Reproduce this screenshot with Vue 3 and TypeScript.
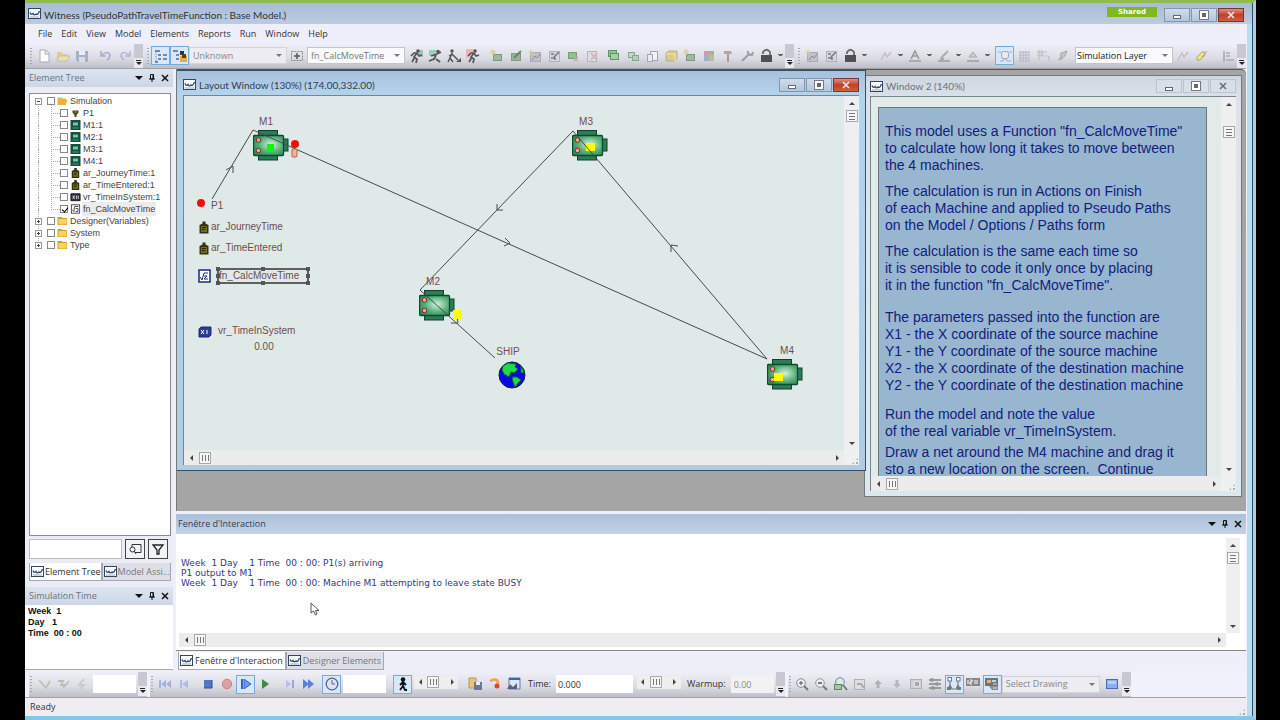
<script setup lang="ts">
interface TreeRow { level: number; icon: string; label: string; checked?: boolean; open?: boolean }
interface Note { lines: string[]; gap: string }
interface Tool { icon?: string; kind?: 'on' | 'sep' | 'thin' | 'wide' | 'caret' }

const menus = ['File', 'Edit', 'View', 'Model', 'Elements', 'Reports', 'Run', 'Window', 'Help']

const tree: TreeRow[] = [
  { level: 0, icon: 'folder-open', label: 'Simulation', open: true },
  { level: 1, icon: 'part', label: 'P1' },
  { level: 1, icon: 'mach', label: 'M1:1' },
  { level: 1, icon: 'mach', label: 'M2:1' },
  { level: 1, icon: 'mach', label: 'M3:1' },
  { level: 1, icon: 'mach', label: 'M4:1' },
  { level: 1, icon: 'attr', label: 'ar_JourneyTime:1' },
  { level: 1, icon: 'attr', label: 'ar_TimeEntered:1' },
  { level: 1, icon: 'vreal', label: 'vr_TimeInSystem:1' },
  { level: 1, icon: 'func', label: 'fn_CalcMoveTime', checked: true },
  { level: 0, icon: 'folder', label: 'Designer(Variables)' },
  { level: 0, icon: 'folder', label: 'System' },
  { level: 0, icon: 'folder', label: 'Type' },
]

const notes: Note[] = [
  { gap: 'g0', lines: ['This model uses a Function "fn_CalcMoveTime"', 'to calculate how long it takes to move between', 'the 4 machines.'] },
  { gap: 'g9', lines: ['The calculation is run in Actions on Finish', 'of each Machine and applied to Pseudo Paths', 'on the Model / Options / Paths form'] },
  { gap: 'g9', lines: ['The calculation is the same each time so', 'it is sensible to code it only once by placing', 'it in the function "fn_CalcMoveTime".'] },
  { gap: 'g15', lines: ['The parameters passed into the function are', 'X1 - the X coordinate of the source machine', 'Y1 - the Y coordinate of the source machine', 'X2 - the X coordinate of the destination machine', 'Y2 - the Y coordinate of the destination machine'] },
  { gap: 'g12', lines: ['Run the model and note the value', 'of the real variable vr_TimeInSystem.'] },
  { gap: 'g4', lines: ['Draw a net around the M4 machine and drag it', 'sto a new location on the screen.  Continue'] },
]

const fileTools: Tool[] = [
  { icon: 'new' }, { icon: 'open' }, { icon: 'save' }, { kind: 'sep' }, { icon: 'undo' }, { icon: 'redo' },
]
const elementTools: Tool[] = [
  { icon: 'run1' }, { icon: 'run2' }, { icon: 'run3' }, { icon: 'run4' }, { kind: 'sep' },
  { icon: 'define' }, { icon: 'detail' }, { icon: 'display' }, { icon: 'edit' }, { icon: 'green' }, { icon: 'delete' }, { kind: 'thin' },
  { icon: 'clone' }, { icon: 'cycle' }, { icon: 'copy' }, { icon: 'pkg' }, { icon: 'define' }, { icon: 'grid3' },
  { icon: 'hammer' }, { icon: 'wrench' }, { icon: 'lock' }, { kind: 'caret' },
]
const drawTools: Tool[] = [
  { icon: 'display' }, { icon: 'edit' }, { icon: 'lock' }, { kind: 'caret' }, { kind: 'wide' },
  { icon: 'curve' }, { kind: 'caret' }, { icon: 'letter' }, { kind: 'caret' }, { icon: 'pen' }, { kind: 'caret' },
  { icon: 'fill' }, { kind: 'caret' }, { kind: 'thin' }, { icon: 'box', kind: 'on' }, { icon: 'grid' }, { icon: 'snap' }, { icon: 'brush' },
]
const layerTools: Tool[] = [{ icon: 'curve' }, { icon: 'link' }, { kind: 'wide' }, { icon: 'align' }]
const modelTools: Tool[] = [{ icon: 'wand' }, { icon: 'check' }, { icon: 'bolt' }]
const runTools: Tool[] = [
  { icon: 'first' }, { icon: 'prev' }, { kind: 'sep' }, { icon: 'stop' }, { icon: 'record' }, { icon: 'step', kind: 'on' },
  { icon: 'play' }, { kind: 'sep' }, { icon: 'next' }, { icon: 'fast' }, { kind: 'sep' }, { icon: 'clock', kind: 'on' },
]
const saveTools: Tool[] = [{ icon: 'savecopy' }, { icon: 'reload' }, { icon: 'report' }]
const zoomTools: Tool[] = [
  { icon: 'zoomin' }, { icon: 'zoomout' }, { icon: 'zoomfit' }, { icon: 'zoomsel' }, { icon: 'up' }, { icon: 'down' },
  { icon: 'camera' }, { icon: 'sliders' }, { icon: 'paths', kind: 'on' }, { icon: 'ticket' }, { icon: 'monitor', kind: 'on' },
]

const machines = [
  { id: 'M1', x: 69, y: 34, tx: 82, ty: 29 },
  { id: 'M3', x: 388, y: 34, tx: 402, ty: 29 },
  { id: 'M2', x: 235, y: 194, tx: 249, ty: 189 },
  { id: 'M4', x: 583, y: 263, tx: 603, ty: 258 },
]
const handles = [[34, 173], [79, 173], [124, 173], [34, 180], [124, 180], [34, 187], [79, 187], [124, 187]]
</script>

<template>
  <svg class="defs" aria-hidden="true">
    <defs>
      <radialGradient id="mg" cx="58%" cy="45%" r="65%">
        <stop offset="0" stop-color="#d8f0dc" /><stop offset=".6" stop-color="#58b07c" /><stop offset="1" stop-color="#2c8a58" />
      </radialGradient>
      <symbol id="logo" viewBox="0 0 13 11"><rect x=".5" y=".5" width="12" height="10" fill="#fff" stroke="#33465e" /><path d="M2 4.500Q3 7.500 5 5.500Q6 8 8 6Q9.500 8 11.500 3" fill="none" stroke="#26467a" stroke-width="1.300" /><path d="M2 9H11" stroke="#9ab" /></symbol>
      <symbol id="machine" viewBox="0 0 36 31"><rect x="5.500" y=".5" width="19" height="6" fill="#2c7c58" stroke="#123f2c" /><rect x="5.500" y="24" width="19" height="6" fill="#2c7c58" stroke="#123f2c" /><rect x="29" y="9" width="6" height="12" fill="#2c7c58" stroke="#123f2c" /><rect x=".5" y="5.500" width="30" height="20" rx="1" fill="url(#mg)" stroke="#0d4a2c" stroke-width="1.300" /><circle cx="5.500" cy="10" r="2.300" fill="#e8a890" stroke="#7a3020" /><circle cx="5.500" cy="20.500" r="2.300" fill="#e8a890" stroke="#7a3020" /></symbol>
      <symbol id="folder" viewBox="0 0 10 10"><path d="M0 1H4L5 2H9.500V9H0Z" fill="#d89a20" /><path d="M1 3H9V8.500H1Z" fill="#f8d468" /></symbol>
      <symbol id="folder-open" viewBox="0 0 10 10"><path d="M0 1.500H4L5 2.500H8.500V9H0Z" fill="#e8b848" /><path d="M2 4H10L8 9H0Z" fill="#f0b040" /></symbol>
      <symbol id="part" viewBox="0 0 10 10"><path d="M2 2.500H8V4.500L6 7V9H4V7L2 4.500Z" fill="#4a4416" /><path d="M4 4H6" stroke="#c8b840" /></symbol>
      <symbol id="mach" viewBox="0 0 10 10"><rect width="10" height="10" fill="#14503e" /><rect x="2.500" y="2.500" width="5" height="3" fill="#7cc0ac" /><path d="M2 8H8" stroke="#4a9a80" /></symbol>
      <symbol id="attr" viewBox="0 0 10 12"><path d="M3.500 0H6.500V2L9.500 3.500V12H.5V3.500L3.500 2Z" fill="#343414" /><rect x="2" y="4.500" width="6" height="6" fill="#6e6c20" /><path d="M3 6H7M3 8H6" stroke="#28280c" /></symbol>
      <symbol id="vreal" viewBox="0 0 12 10"><path d="M1 1.500H11V9H1Z" fill="#303844" stroke="#111" /><path d="M3 3.500L5 7M5 3.500L3 7M7 3.500V7M9 3.500V7" stroke="#fff" stroke-width=".8" /></symbol>
      <symbol id="func" viewBox="0 0 12 12"><rect x="1" y="1" width="10" height="10" fill="#fff" stroke="#333" /><path d="M2 7L4 9L5 3H9.500M6 5.500H9V9H6" fill="none" stroke="#333" /></symbol>
      <symbol id="new" viewBox="0 0 16 16"><path d="M4 2H10L13 5V14H4Z" fill="#fff" stroke="#a9a9b4" /><path d="M9 2V6H13" fill="#e8e8a8" stroke="#b4b4b4" /></symbol>
      <symbol id="open" viewBox="0 0 16 16"><path d="M2 4H7L8 6H13V13H2Z" fill="#d8cfa0" /><path d="M4 8H15L12 13H2Z" fill="#ece0b0" stroke="#bcb490" stroke-width=".7" /></symbol>
      <symbol id="save" viewBox="0 0 16 16"><path d="M2 3H14V14H4L2 12Z" fill="#a8b0c8" /><rect x="5" y="3" width="6" height="4" fill="#eceef6" /><rect x="5" y="9" width="6" height="5" fill="#d8dce8" /></symbol>
      <symbol id="undo" viewBox="0 0 16 16"><path d="M4 7Q10 2 12 7Q12 10 9 12M3 3V8H8" fill="none" stroke="#a6b2d0" stroke-width="1.700" /></symbol>
      <symbol id="redo" viewBox="0 0 16 16"><path d="M12 7Q6 2 4 7Q4 10 7 12M13 3V8H8" fill="none" stroke="#b2bcd6" stroke-width="1.700" /></symbol>
      <symbol id="treea" viewBox="0 0 16 16"><path d="M2 3H7M5 7H8M10 7H14M5 11H8M10 11H14M2 14H5" stroke="#4d6c98" stroke-width="1.500" /><path d="M3 4V14" stroke="#889" stroke-dasharray="1 1" /></symbol>
      <symbol id="treeb" viewBox="0 0 16 16"><path d="M1 3H6M4 7H7M4 11H7" stroke="#4d6c98" stroke-width="1.500" /><rect x="8" y="3" width="4" height="4" fill="#334" /><rect x="8" y="8" width="7" height="6" fill="#e0b050" /><rect x="10" y="6" width="4" height="4" fill="#554020" /></symbol>
      <symbol id="target" viewBox="0 0 16 16"><rect x="2.500" y="3.500" width="11" height="9" fill="none" stroke="#888" stroke-dasharray="2 1" /><path d="M8 5V11M5 8H11" stroke="#555" stroke-width="1.500" /></symbol>
      <symbol id="man" viewBox="0 0 16 16"><circle cx="10" cy="3" r="1.800" fill="#555" /><path d="M9 5L6 9L9 11L8 15M7 9L4 14M3 8L6 5H9L11 8L14 7" fill="none" stroke="#555" stroke-width="1.700" /></symbol>
      <symbol id="run1" viewBox="0 0 16 16"><path d="M10 2H15V9H12Z" fill="#9cc8b0" /><use href="#man" /></symbol>
      <symbol id="run2" viewBox="0 0 16 16"><path d="M2 2H9V8H2Z" fill="#90d4bc" /><path d="M2 13L7 11L9 7M9 11L13 14M4 8L10 6L14 4" fill="none" stroke="#555" stroke-width="1.800" /><circle cx="11" cy="3.500" r="1.800" fill="#555" /></symbol>
      <symbol id="run3" viewBox="0 0 16 16"><circle cx="6" cy="3" r="1.700" fill="#555" /><path d="M6 5L4 10L7 14M4 10L2 14M6 6L9 9L12 12M3 8L6 6" fill="none" stroke="#555" stroke-width="1.500" /><path d="M10 14L15 10V14Z" fill="#555" /></symbol>
      <symbol id="run4" viewBox="0 0 16 16"><path d="M1 1H8V5L3 10H1Z" fill="#f0b4b4" /><use href="#man" /></symbol>
      <symbol id="define" viewBox="0 0 16 16"><rect x="4.500" y="6.500" width="8" height="6" fill="#9cba9c" stroke="#84948a" /><path d="M4 1V7M1 4H7M2 2L6 6M6 2L2 6" stroke="#dccf8c" /></symbol>
      <symbol id="detail" viewBox="0 0 16 16"><rect x="3.500" y="5.500" width="9" height="7" fill="#98b09c" stroke="#889888" /><path d="M6 10L13 3" stroke="#68886c" stroke-width="2" /></symbol>
      <symbol id="display" viewBox="0 0 16 16"><rect x="3.500" y="4.500" width="10" height="9" fill="#c0c2c8" stroke="#a8aab2" /><path d="M5 12L8 8L10 10L13 6" fill="none" stroke="#888a96" /><path d="M4 1V7M1 4H7" stroke="#dccf9c" /></symbol>
      <symbol id="edit" viewBox="0 0 16 16"><rect x="3.500" y="3.500" width="10" height="10" fill="#d6d8de" stroke="#acb0b8" /><path d="M5 10H9V12M8 9L13 4M5 6H8" fill="none" stroke="#777a84" stroke-width="1.600" /></symbol>
      <symbol id="green" viewBox="0 0 16 16"><rect x="3.500" y="4.500" width="8" height="6" fill="#8cc48c" stroke="#789c7c" /><path d="M9 9L13 13M13 9L9 13" stroke="#c8aa90" stroke-width="1.300" /></symbol>
      <symbol id="delete" viewBox="0 0 16 16"><rect x="3.500" y="3.500" width="9" height="10" fill="#dcdce2" stroke="#b4b4bc" /><path d="M7 5L13 12M13 5L7 12" stroke="#d8b0b4" stroke-width="1.500" /></symbol>
      <symbol id="clone" viewBox="0 0 16 16"><rect x="2.500" y="2.500" width="8" height="6" fill="#88c48c" stroke="#5c9664" /><rect x="4.500" y="5.500" width="8" height="6" fill="#a4d0a4" stroke="#5c9664" /></symbol>
      <symbol id="cycle" viewBox="0 0 16 16"><rect x="3.500" y="4.500" width="6" height="5" fill="#c4d8c4" stroke="#8aa48c" /><rect x="7.500" y="7.500" width="6" height="5" fill="#b4d0b4" stroke="#8aa48c" /></symbol>
      <symbol id="copy" viewBox="0 0 16 16"><rect x="6.500" y="3.500" width="7" height="9" fill="#f2f2f6" stroke="#a4a4ae" /><rect x="3.500" y="6.500" width="5" height="7" fill="#eaeaf0" stroke="#a4a4ae" /></symbol>
      <symbol id="pkg" viewBox="0 0 16 16"><path d="M3 5L6 3H14V10L12 13H3Z" fill="#d8cc88" stroke="#b4a870" stroke-width=".8" /><path d="M3 6H12V13" fill="none" stroke="#f2e8b8" /></symbol>
      <symbol id="grid3" viewBox="0 0 16 16"><path d="M3 3H8V7H3Z" fill="#c8a09c" /><path d="M8 3H13V7H8Z" fill="#a0b4a0" /><path d="M3 7H8V13H3Z" fill="#9cb0c8" /><path d="M8 7H13V13H8Z" fill="#bcbc9c" /></symbol>
      <symbol id="hammer" viewBox="0 0 16 16"><path d="M4 3H11L12 6H4Z" fill="#b0a6a6" /><path d="M8 6V14" stroke="#bc9494" stroke-width="2" /></symbol>
      <symbol id="wrench" viewBox="0 0 16 16"><path d="M3 13L10 6M9 3Q8 7 13 7L14 4" fill="none" stroke="#9c9ca6" stroke-width="2" /></symbol>
      <symbol id="lock" viewBox="0 0 16 16"><rect x="3" y="7" width="11" height="7" fill="#505054" /><path d="M5 6V4Q8.500 -.5 12 4V7" fill="none" stroke="#6a6a6e" stroke-width="1.800" /></symbol>
      <symbol id="curve" viewBox="0 0 16 16"><path d="M3 12L7 5L9 9L13 4" fill="none" stroke="#ccb8c0" stroke-width="1.400" /></symbol>
      <symbol id="letter" viewBox="0 0 16 16"><path d="M4 11L8 3L12 11M6 8H10" fill="none" stroke="#999" stroke-width="1.600" /><path d="M2 13H14" stroke="#aaa" stroke-width="2" /></symbol>
      <symbol id="pen" viewBox="0 0 16 16"><path d="M5 10L12 3M4 11H8" stroke="#aaa" stroke-width="1.800" /><path d="M2 13H14" stroke="#aaa" stroke-width="2" /></symbol>
      <symbol id="fill" viewBox="0 0 16 16"><path d="M4 9L8 4L12 9Z" fill="#ccc" stroke="#aaa" /><path d="M2 13H14" stroke="#aaa" stroke-width="2" /></symbol>
      <symbol id="box" viewBox="0 0 16 16"><rect x="4.500" y="3.500" width="7" height="7" rx="2" fill="#e8eaf0" stroke="#9aa4b4" /><path d="M1 4H4M12 4H15M3 13H6L8 10L10 13H14" fill="none" stroke="#a4a8b4" /></symbol>
      <symbol id="grid" viewBox="0 0 16 16"><path d="M3 4H13M3 7H13M3 10H13M3 13H13M4 3V14M7 3V14M10 3V14M13 3V14" stroke="#b4b8cc" /></symbol>
      <symbol id="snap" viewBox="0 0 16 16"><path d="M2 4H12M2 7H9M4 2V12M7 2V9M10 8H14V13" fill="none" stroke="#b8bac6" /></symbol>
      <symbol id="brush" viewBox="0 0 16 16"><path d="M4 12L8 9M7 5L13 3L11 8L6 12Z" fill="#c4c4ca" stroke="#aaa" /></symbol>
      <symbol id="link" viewBox="0 0 16 16"><path d="M3 9L8 4H11V7L6 12H3ZM8 9L13 3" fill="#ece48c" stroke="#b4ac50" /></symbol>
      <symbol id="align" viewBox="0 0 16 16"><path d="M4 3V14" stroke="#888" /><path d="M6 5H10M6 8H10M6 12H14" stroke="#aab" stroke-width="1.500" /></symbol>
      <symbol id="wand" viewBox="0 0 16 16"><path d="M3 4L10 12L14 5" fill="none" stroke="#c2c0b4" stroke-width="1.800" /></symbol>
      <symbol id="check" viewBox="0 0 16 16"><path d="M3 5H8L6 9H10M8 12L14 5" fill="none" stroke="#bcbeb4" stroke-width="1.800" /></symbol>
      <symbol id="bolt" viewBox="0 0 16 16"><path d="M10 3L5 9H10L6 13" fill="none" stroke="#c6c6c8" stroke-width="1.600" /></symbol>
      <symbol id="first" viewBox="0 0 16 16"><path d="M3 4V12" stroke="#a4b2e0" stroke-width="2" /><path d="M9 4V12L4 8ZM14 4V12L9 8Z" fill="#a4b2e0" /></symbol>
      <symbol id="prev" viewBox="0 0 16 16"><path d="M5 4V12" stroke="#b0bce4" stroke-width="2" /><path d="M12 4V12L6 8Z" fill="#b0bce4" /></symbol>
      <symbol id="stop" viewBox="0 0 16 16"><rect x="4" y="4" width="8" height="8" fill="#5078c8" /><path d="M4 12H12V4" fill="none" stroke="#2c4e94" /></symbol>
      <symbol id="record" viewBox="0 0 16 16"><circle cx="8" cy="8" r="4.700" fill="#e0a0a0" stroke="#cc8080" /></symbol>
      <symbol id="step" viewBox="0 0 16 16"><path d="M4 3V13" stroke="#3264bc" stroke-width="2" /><path d="M6 3L13 8L6 13Z" fill="#6a9ae4" stroke="#3264bc" /></symbol>
      <symbol id="play" viewBox="0 0 16 16"><path d="M5 3L12 8L5 13Z" fill="#3c8c44" /></symbol>
      <symbol id="next" viewBox="0 0 16 16"><path d="M12 4V12" stroke="#98a8dc" stroke-width="2" /><path d="M5 4V12L10 8Z" fill="#b4c0e8" /></symbol>
      <symbol id="fast" viewBox="0 0 16 16"><path d="M3 3L9 8L3 13ZM8 3L14 8L8 13Z" fill="#5a80d8" /></symbol>
      <symbol id="clock" viewBox="0 0 16 16"><circle cx="8" cy="8" r="5.800" fill="#dce4f4" stroke="#56658c" stroke-width="1.300" /><path d="M8 4V8H11" fill="none" stroke="#56658c" /></symbol>
      <symbol id="walk" viewBox="0 0 16 16"><circle cx="8" cy="3.500" r="2.300" fill="#111" /><path d="M8 5V10M8 6L5 9M8 6L11 9M8 10L5 14M8 10L10 14H12" fill="none" stroke="#111" stroke-width="1.800" /></symbol>
      <symbol id="savecopy" viewBox="0 0 16 16"><path d="M2 2H9V12H2Z" fill="#e8c878" stroke="#b89848" /><path d="M7 6H15V14H7Z" fill="#6a7898" /><rect x="9" y="6" width="4" height="3" fill="#eef" /></symbol>
      <symbol id="reload" viewBox="0 0 16 16"><path d="M4 5Q12 1 12 8" fill="none" stroke="#f0a040" stroke-width="2.500" /><circle cx="11" cy="10" r="2.500" fill="#d84830" /></symbol>
      <symbol id="report" viewBox="0 0 16 16"><path d="M4 2H15V13H4Z" fill="#dfe8f8" stroke="#5878b0" /><path d="M4 3H15" stroke="#3c64b0" stroke-width="2" /><path d="M2 13L5 8L8 11L12 7V13Z" fill="#5a6478" /></symbol>
      <symbol id="zoomin" viewBox="0 0 16 16"><circle cx="7" cy="7" r="4.300" fill="#eee" stroke="#8c8c94" /><path d="M10 10L14 14" stroke="#777" stroke-width="2" /><path d="M5 7H9M7 5V9" stroke="#555" /></symbol>
      <symbol id="zoomout" viewBox="0 0 16 16"><circle cx="7" cy="7" r="4.300" fill="#eee" stroke="#8c98a4" /><path d="M10 10L14 14" stroke="#777" stroke-width="2" /><path d="M5 7H9" stroke="#357" stroke-width="1.500" /></symbol>
      <symbol id="zoomfit" viewBox="0 0 16 16"><circle cx="8" cy="6" r="4.300" fill="#dce8ee" stroke="#68889c" /><path d="M11 9L15 14" stroke="#777" stroke-width="2" /><rect x="2.500" y="8.500" width="7" height="5" fill="#a8c8a0" stroke="#648464" /></symbol>
      <symbol id="zoomsel" viewBox="0 0 16 16"><rect x="3.500" y="3.500" width="10" height="10" fill="#dedee2" stroke="#b0b0b4" /><path d="M6 8H10L13 12" fill="none" stroke="#aaa" stroke-width="2" /></symbol>
      <symbol id="up" viewBox="0 0 16 16"><path d="M8 4L12 8H9.500V12H6.500V8H4Z" fill="#b0b0b4" /></symbol>
      <symbol id="down" viewBox="0 0 16 16"><path d="M8 12L12 8H9.500V4H6.500V8H4Z" fill="#b8b8bc" /></symbol>
      <symbol id="camera" viewBox="0 0 16 16"><rect x="2.500" y="3.500" width="11" height="9" fill="#d0d0d4" stroke="#b0b0b4" /><circle cx="9" cy="8" r="3" fill="#a8a8ae" stroke="#eee" /></symbol>
      <symbol id="sliders" viewBox="0 0 16 16"><path d="M2 4H14M2 8H14M2 12H14" stroke="#808084" stroke-width="1.500" /><circle cx="5" cy="4" r="2" fill="#999" /><circle cx="10" cy="8" r="2" fill="#999" /><circle cx="6" cy="12" r="2" fill="#999" /></symbol>
      <symbol id="paths" viewBox="0 0 16 16"><path d="M4 4V9L2.500 12M4 9L6 13H10L12 9V4M12 9L13.500 12" fill="none" stroke="#777" stroke-width="1.200" /><rect x="2" y="1.500" width="3.500" height="3.500" fill="#fff" stroke="#777" /><rect x="10.500" y="1.500" width="3.500" height="3.500" fill="#fff" stroke="#777" /><rect x="1" y="11" width="4" height="3" fill="#777" /><rect x="11" y="11" width="4" height="3" fill="#777" /></symbol>
      <symbol id="ticket" viewBox="0 0 16 16"><rect x="1" y="2" width="14" height="8" fill="#888" /><path d="M3 4V8M5 4H7V6H5V8H7M10 4V8M12 4V8" fill="none" stroke="#fff" /></symbol>
      <symbol id="monitor" viewBox="0 0 16 16"><path d="M1 2H14V10H1Z" fill="#6c7480" /><path d="M3 4H7V7H3Z" fill="#e0b080" /><path d="M8 4H12V6H8Z" fill="#c8d0d8" /><path d="M5 10H14V14H8Z" fill="#8c8c90" /><path d="M9 8H13M9 12H13" stroke="#ddd" /></symbol>
      <symbol id="screen" viewBox="0 0 16 16"><rect x="2.500" y="3.500" width="11" height="9" fill="#88b0f0" stroke="#486cb4" /><path d="M4 5H12V8H4Z" fill="#b4d0fc" /></symbol>
      <symbol id="pin" viewBox="0 0 8 8"><path d="M2.500 .5H5.500V5H2.500ZM1 5H7M4 5V8" fill="none" stroke="#111" /><path d="M5 1V5" stroke="#111" /></symbol>
      <symbol id="cross" viewBox="0 0 8 8"><path d="M1 1L7 7M7 1L1 7" stroke="#111" stroke-width="1.500" /></symbol>
      <symbol id="drop" viewBox="0 0 8 8"><path d="M0 2H8L4 6Z" fill="#111" /></symbol>
    </defs>
  </svg>

  <div class="stage">
    <main class="app">
      <header class="title">
        <svg class="logo"><use href="#logo" /></svg>
        <h1>Witness (PseudoPathTravelTimeFunction : Base Model.)</h1>
        <span class="shared">Shared</span>
        <div class="caps"><button class="cap" aria-label="Minimize"><i class="min" /></button><button class="cap" aria-label="Maximize"><i class="max" /></button><button class="cap red" aria-label="Close"><svg><use href="#cross" /></svg></button></div>
      </header>

      <nav class="menu"><button v-for="m in menus" :key="m">{{ m }}</button></nav>

      <div class="toolbar">
        <div class="group">
          <i class="grip" />
          <template v-for="(t, i) in fileTools" :key="i"><i v-if="!t.icon" :class="t.kind" /><button v-else class="tool" :aria-label="t.icon"><svg><use :href="'#' + t.icon" /></svg></button></template>
          <button class="over" aria-label="More file tools" />
        </div>
        <div class="group">
          <i class="grip" />
          <button class="tool on" aria-label="Tree view"><svg><use href="#treea" /></svg></button>
          <button class="tool on" aria-label="Tree details"><svg><use href="#treeb" /></svg></button>
          <span class="pick"><select class="flat" aria-label="Element type"><option>Unknown</option></select></span>
          <button class="tool" aria-label="Locate"><svg><use href="#target" /></svg></button>
          <span class="pick inset"><select aria-label="Element"><option>fn_CalcMoveTime</option></select></span>
          <template v-for="(t, i) in elementTools" :key="i"><i v-if="!t.icon" :class="t.kind" /><button v-else class="tool" :aria-label="t.icon"><svg><use :href="'#' + t.icon" /></svg></button></template>
          <button class="over" aria-label="More element tools" />
        </div>
        <div class="group">
          <i class="grip" />
          <template v-for="(t, i) in drawTools" :key="i"><i v-if="!t.icon" :class="t.kind" /><button v-else class="tool" :class="t.kind" :aria-label="t.icon"><svg><use :href="'#' + t.icon" /></svg></button></template>
          <span class="pick layer"><select aria-label="Layer"><option>Simulation Layer</option></select></span>
          <template v-for="(t, i) in layerTools" :key="i"><i v-if="!t.icon" :class="t.kind" /><button v-else class="tool" :aria-label="t.icon"><svg><use :href="'#' + t.icon" /></svg></button></template>
          <button class="over double" aria-label="More drawing tools" />
        </div>
      </div>

      <div class="work">
        <aside class="side">
          <div class="dock"><h2>Element Tree</h2><button aria-label="Menu"><svg><use href="#drop" /></svg></button><button aria-label="Pin"><svg><use href="#pin" /></svg></button><button aria-label="Close"><svg><use href="#cross" /></svg></button></div>
          <ul class="tree">
            <li v-for="r in tree" :key="r.label" :class="'lv' + r.level">
              <button v-if="r.level === 0" class="exp" :class="{ open: r.open }" aria-label="Expand" />
              <label :class="{ sel: r.checked }"><input type="checkbox" :checked="r.checked"><svg><use :href="'#' + r.icon" /></svg><span>{{ r.label }}</span></label>
            </li>
          </ul>
          <div class="find"><input type="text" aria-label="Find element"><button aria-label="Find"><svg viewBox="0 0 14 12"><path d="M4 4V1.500H13V9.500H7" fill="none" stroke="#333" /><circle cx="4.500" cy="6.500" r="2.500" fill="none" stroke="#333" /><path d="M6 8L8 11" stroke="#333" /></svg></button><button aria-label="Filter"><svg viewBox="0 0 14 12"><path d="M2 2H12L8 7V11H6V7Z" fill="none" stroke="#222" stroke-width="1.300" /></svg></button></div>
          <div class="tabs"><button class="active"><svg><use href="#logo" /></svg>Element Tree</button><button><svg><use href="#logo" /></svg>Model Assi...</button></div>
          <div class="dock second"><h2>Simulation Time</h2><button aria-label="Menu"><svg><use href="#drop" /></svg></button><button aria-label="Pin"><svg><use href="#pin" /></svg></button><button aria-label="Close"><svg><use href="#cross" /></svg></button></div>
          <pre class="clockbox">Week  1
Day   1
Time  00 : 00</pre>
        </aside>

        <section class="main">
          <div class="mdi">
            <section class="win two">
              <header><svg class="logo"><use href="#logo" /></svg><h2>Window 2 (140%)</h2><div class="caps"><button class="cap" aria-label="Minimize"><i class="min" /></button><button class="cap" aria-label="Maximize"><i class="max" /></button><button class="cap" aria-label="Close"><svg class="pale"><use href="#cross" /></svg></button></div></header>
              <div class="body">
                <div class="view">
                  <div class="notes"><p v-for="n in notes" :key="n.lines[0]" :class="n.gap"><span v-for="l in n.lines" :key="l">{{ l }}</span></p></div>
                </div>
                <div class="vbar"><button class="a-up" aria-label="Scroll up" /><i class="thumb low" /><button class="a-down" aria-label="Scroll down" /></div>
                <div class="hbar"><button class="a-left" aria-label="Scroll left" /><i class="thumb" /><button class="a-right" aria-label="Scroll right" /></div>
                <i class="size" />
              </div>
            </section>

            <section class="win one">
              <header><svg class="logo"><use href="#logo" /></svg><h2>Layout Window (130%) (174.00,332.00)</h2><div class="caps"><button class="cap" aria-label="Minimize"><i class="min" /></button><button class="cap" aria-label="Maximize"><i class="max" /></button><button class="cap red" aria-label="Close"><svg><use href="#cross" /></svg></button></div></header>
              <div class="body">
                <svg class="canvas" role="img" aria-label="Model layout">
                  <use v-for="m in machines" :key="m.id" href="#machine" :x="m.x" :y="m.y" width="36" height="31" />
                  <rect x="402" y="47" width="9" height="8" fill="#ff0" /><rect x="590" y="277" width="9" height="8" fill="#ff0" />
                  <g fill="none" stroke="#444c4a">
                    <path d="M28 103L69 34L583 263L389 35L236 194L311 262" />
                    <path d="M42 74L49 70L49 77M313 108V114H319M320 150L326 147L321 142M494 150L487 149L487 156M267 227L274 227L273 220" />
                  </g>
                  <rect x="83" y="48" width="7" height="7" fill="#0f0" /><rect x="269" y="214" width="9" height="9" fill="#ff0" />
                  <circle cx="17" cy="107" r="4" fill="#f01010" /><circle cx="111" cy="48" r="4" fill="#f01010" />
                  <rect x="108" y="53" width="5" height="8" rx="1" fill="#e8b898" stroke="#a86848" />
                  <use href="#attr" x="15" y="125" width="10" height="13" /><use href="#attr" x="15" y="146" width="10" height="13" />
                  <rect x="15" y="174" width="11" height="12" fill="#fff" stroke="#1a2a80" stroke-width="1.500" /><path d="M16 181L18 184L20 177H24M20 180H23L20 183H24" fill="none" stroke="#1a2a80" />
                  <path d="M15 233L17 231H27V239L25 241H15Z" fill="#2a3c94" stroke="#1a2a80" /><path d="M17 234L20 238M20 234L17 238M23 234V238" stroke="#fff" />
                  <circle cx="328" cy="279" r="13" fill="#0808e8" stroke="#123" />
                  <path d="M319 270L324 267L332 268L331 271L334 273L330 277L327 276L325 281L320 278L318 274ZM328 281L333 281L337 284L334 287L331 291L329 286ZM337 270L340 276L337 277Z" fill="#20d848" stroke="#0a6a28" />
                  <rect x="34" y="173" width="90" height="14" fill="none" stroke="#333" stroke-width="1.500" />
                  <rect v-for="h in handles" :key="h.join()" :x="h[0] - 2" :y="h[1] - 2" width="4" height="4" fill="#555" />
                  <g class="names">
                    <text v-for="m in machines" :key="m.id" :x="m.tx" :y="m.ty" text-anchor="middle">{{ m.id }}</text>
                    <text x="324" y="259" text-anchor="middle">SHIP</text>
                    <text x="27" y="113">P1</text>
                    <text x="27" y="134">ar_JourneyTime</text>
                    <text x="27" y="155">ar_TimeEntered</text>
                    <text x="35" y="183">fn_CalcMoveTime</text>
                    <text x="34" y="238">vr_TimeInSystem</text>
                    <text x="80" y="254" text-anchor="middle">0.00</text>
                  </g>
                </svg>
                <div class="vbar"><button class="a-up" aria-label="Scroll up" /><i class="thumb" /><button class="a-down" aria-label="Scroll down" /></div>
                <div class="hbar"><button class="a-left" aria-label="Scroll left" /><i class="thumb" /><button class="a-right" aria-label="Scroll right" /></div>
                <i class="size" />
              </div>
            </section>
          </div>

          <div class="dock log-head"><h2>Fenêtre d'Interaction</h2><button aria-label="Menu"><svg><use href="#drop" /></svg></button><button aria-label="Pin"><svg><use href="#pin" /></svg></button><button aria-label="Close"><svg><use href="#cross" /></svg></button></div>
          <div class="log">
            <pre>Week  1 Day    1 Time  00 : 00: P1(s) arriving
P1 output to M1
Week  1 Day    1 Time  00 : 00: Machine M1 attempting to leave state BUSY</pre>
            <div class="vbar"><button class="a-up" aria-label="Scroll up" /><i class="thumb" /><button class="a-down" aria-label="Scroll down" /></div>
            <div class="hbar"><button class="a-left" aria-label="Scroll left" /><i class="thumb" /><button class="a-right" aria-label="Scroll right" /></div>
            <svg class="cursor" viewBox="0 0 10 14"><path d="M1 1V11L3.500 9L5.500 13L7 12L5.500 8.500H9Z" fill="#fff" stroke="#555" /></svg>
          </div>
          <div class="tabs"><button class="active"><svg><use href="#logo" /></svg>Fenêtre d'Interaction</button><button><svg><use href="#logo" /></svg>Designer Elements</button></div>
        </section>
      </div>

      <div class="toolbar bottom">
        <div class="group">
          <i class="grip" />
          <button v-for="t in modelTools" :key="t.icon" class="tool" :aria-label="t.icon"><svg><use :href="'#' + t.icon" /></svg></button>
          <input class="box" type="text" aria-label="Model value">
          <button class="over" aria-label="More model tools" />
        </div>
        <div class="group">
          <i class="grip" />
          <template v-for="(t, i) in runTools" :key="i"><i v-if="!t.icon" :class="t.kind" /><button v-else class="tool" :class="t.kind" :aria-label="t.icon"><svg><use :href="'#' + t.icon" /></svg></button></template>
          <input class="box" type="text" aria-label="Stop time">
          <i class="sep" />
          <button class="tool on" aria-label="Walk"><svg><use href="#walk" /></svg></button>
          <div class="mini"><button class="a-left" aria-label="Slower walk" /><i class="thumb" /><button class="a-right" aria-label="Faster walk" /></div>
          <i class="wide" />
          <button v-for="t in saveTools" :key="t.icon" class="tool" :aria-label="t.icon"><svg><use :href="'#' + t.icon" /></svg></button>
          <label for="time">Time:</label><input id="time" class="box long" type="text" value="0.000">
          <div class="mini"><button class="a-left" aria-label="Slower" /><i class="thumb" /><button class="a-right" aria-label="Faster" /></div>
          <label for="warm">Warmup:</label><input id="warm" class="box dim" type="text" value="0.00">
          <button class="over" aria-label="More run tools" />
        </div>
        <div class="group">
          <i class="grip" />
          <button v-for="t in zoomTools" :key="t.icon" class="tool" :class="t.kind" :aria-label="t.icon"><svg><use :href="'#' + t.icon" /></svg></button>
          <span class="pick"><select class="flat" aria-label="Drawing"><option>Select Drawing</option></select></span>
          <i class="thin" />
          <button class="tool" aria-label="Full screen"><svg><use href="#screen" /></svg></button>
          <button class="over" aria-label="More view tools" />
        </div>
      </div>

      <footer class="status">Ready<i class="size" /></footer>
    </main>
  </div>
</template>

<style>
html, body { background: #000; overflow: hidden; }
</style>

<style scoped>
* { box-sizing: border-box; }
.defs { position: absolute; width: 0; height: 0; }
button, input, select { font: inherit; color: inherit; margin: 0; padding: 0; border: 0; background: none; border-radius: 0; outline: 0; }
h1, h2, p, pre, ul { margin: 0; padding: 0; font: inherit; list-style: none; }
i { display: block; flex: none; }
.stage { height: 100vh; padding: 0 24px 0 25px; background: #000; font: 10px/12px "Open Sans", "Noto Sans", sans-serif; color: #333; }
.app { height: 100%; display: flex; flex-direction: column; background: #eeeff8; border-top: 3px solid #90bc50; border-right: 3px solid #b8cbd8; border-bottom: 4px solid #84c8e8; box-shadow: inset -1px 0 #245070, inset -6px 0 #b8dcf0; padding-right: 7px; }
.title { flex: none; height: 21px; display: flex; align-items: center; gap: 3px; padding-left: 3px; margin-right: -6px; padding-right: 8px; background: linear-gradient(#a8bcd4, #bccbe2); color: #2c3440; font: 10px/12px Lato, "Open Sans", sans-serif; }
.logo { flex: none; width: 13px; height: 11px; }
.title h1 { flex: 1; padding-top: 2px; }
.shared { width: 50px; height: 10px; margin: -4px 4px 0 0; background: #80b820; color: #fff; font: bold 7px/10px "DejaVu Sans", sans-serif; text-align: center; }
.caps { display: flex; gap: 1px; }
.title .caps { padding-top: 2px; }
.cap { width: 26px; height: 14px; display: flex; align-items: center; justify-content: center; border: 1px solid #8496ac; background: linear-gradient(#d0dcea, #b4c6dc); }
.cap svg { width: 8px; height: 8px; filter: invert(1); }
.cap svg.pale { filter: none; opacity: .55; }
.cap.red { background: linear-gradient(#e0907c, #c04028 50%, #d06040); border-color: #703830; }
.min { width: 8px; height: 4px; margin-top: 5px; border: 1px solid #667; background: #fff; }
.max { width: 8px; height: 8px; border: 2px solid #fff; background: #667; outline: 1px solid #778; }
.menu { flex: none; height: 19px; display: flex; align-items: center; gap: 9px; padding-left: 13px; font-size: 9px; background: #efeffb; }
.toolbar { flex: none; height: 26px; display: flex; gap: 3px; padding-left: 4px; background: linear-gradient(#f0f0fa, #dcdce4 60%, #bebec8); border-bottom: 1px solid #a0a0a8; font-size: 9px; overflow: hidden; }
.group { flex: none; display: flex; align-items: center; }
.grip { width: 5px; height: 18px; background: radial-gradient(circle, #a8a8b4 1px, transparent 1px) 0 0 / 4px 3px; background-repeat: repeat-y; }
.tool { flex: none; width: 19px; height: 19px; display: flex; align-items: center; justify-content: center; }
.tool svg { width: 16px; height: 16px; }
.tool.on { border: 1px solid #74acdc; background: #d8e8fa; }
.sep { width: 5px; } .thin { width: 3px; } .wide { width: 7px; }
.caret { width: 10px; height: 3px; background: linear-gradient(#666, #666) center top / 5px 1px no-repeat, linear-gradient(#666, #666) center 1px / 3px 1px no-repeat; }
.over { position: relative; flex: none; width: 9px; height: 24px; background: linear-gradient(#c8c8d2 60%, #e8e8ee 60%); }
.over::after { content: ""; position: absolute; left: 2px; bottom: 3px; border: 3px solid transparent; border-top-color: #222; border-bottom: 0; }
.over::before { content: ""; position: absolute; left: 2px; bottom: 7px; width: 5px; height: 1px; background: #222; }
.pick { position: relative; flex: none; display: block; width: 98px; height: 17px; }
.pick.inset { margin: 0 1px; }
.pick.layer { margin: 0 0 0 4px; }
.pick select { appearance: none; width: 100%; height: 100%; padding: 0 3px; border: 1px solid #c4c4cc; background: #fafafc; color: #777; }
.pick select.flat { background: #ececf2; border-color: #d4d4da; color: #888; }
.pick.layer select { color: #222; padding: 0 1px; }
.pick::after { content: ""; position: absolute; right: 5px; top: 7px; border: 3px solid transparent; border-top-color: #777; border-bottom: 0; pointer-events: none; }

.work { flex: 1; min-height: 0; display: flex; gap: 3px; }
.side { flex: none; width: 148px; display: flex; flex-direction: column; background: #ebecf5; }
.dock { flex: none; height: 18px; display: flex; align-items: center; gap: 5px; padding: 0 4px; background: linear-gradient(#dce4f0, #ccd6e6); color: #6c7480; font-size: 9px; }
.dock h2 { flex: 1; }
.dock button { width: 8px; height: 8px; display: flex; }
.dock svg { width: 8px; height: 8px; }
.tree { flex: 1; min-height: 0; margin: 6px 2px 0 4px; padding: 1px 0; border: 1px solid #888c98; background: #fff; font: 9px/12px "Liberation Sans", Arial, sans-serif; color: #444; overflow: hidden; }
.tree li { position: relative; height: 12px; display: flex; align-items: center; padding-left: 17px; }
.tree li.lv1 { padding-left: 30px; }
.tree li.lv1::before { content: ""; position: absolute; left: 21px; top: -6px; width: 8px; height: 12px; border: 1px dotted #aaa; border-width: 0 0 1px 1px; }
.tree li::after { content: ""; position: absolute; left: 8px; top: -6px; height: 12px; border-left: 1px dotted #aaa; }
.tree li:first-child::after { display: none; }
.exp { position: absolute; z-index: 1; left: 5px; top: 3px; width: 7px; height: 7px; border: 1px solid #999; background: linear-gradient(#444, #444) center / 3px 1px no-repeat, linear-gradient(#444, #444) center / 1px 3px no-repeat, #fff; }
.exp.open { background: linear-gradient(#444, #444) center / 3px 1px no-repeat, #fff; }
.tree label { display: flex; align-items: center; gap: 2px; }
.tree input { position: relative; z-index: 1; appearance: none; width: 8px; height: 8px; border: 1px solid #888; background: #fff; display: flex; }
.tree input:checked::after { content: ""; width: 3px; height: 5px; margin-left: 2px; border: solid #000; border-width: 0 1px 1px 0; transform: rotate(40deg); }
.tree svg { width: 11px; height: 10px; }
.tree .sel span { background: #ececec; outline: 1px solid #ececec; }
.find { flex: none; height: 22px; display: flex; align-items: center; gap: 3px; padding: 0 5px 0 4px; margin-top: 2px; }
.find input { flex: 1; min-width: 0; height: 20px; border: 1px solid #b8bcc4; background: #fff; }
.find button { width: 20px; height: 20px; display: flex; align-items: center; justify-content: center; border: 1px solid #444; background: #f2f3f6; }
.find svg { width: 14px; height: 12px; }
.tabs { flex: none; height: 18px; display: flex; margin-top: 1px; padding-left: 2px; font-size: 9px; }
.side .tabs { margin: 3px 0 6px; padding-left: 4px; }
.tabs button { display: flex; align-items: center; gap: 2px; padding: 0 2px 0 1px; border: 1px solid #a4a8b4; border-top: 0; background: #dedfe6; color: #777; white-space: nowrap; }
.side .tabs button { padding-right: 0; gap: 1px; }
.tabs button.active { background: #fff; color: #333; }
.tabs svg { width: 13px; height: 11px; }
.clockbox { flex: none; height: 65px; padding: 1px 3px; background: #fff; border-bottom: 1px solid #aaa; font: bold 9px/11px "Liberation Sans", Arial, sans-serif; color: #111; }

.main { flex: 1; min-width: 0; display: flex; flex-direction: column; }
.mdi { position: relative; flex: 1; min-height: 0; overflow: hidden; background: #a5a5a5; border-top: 1px solid #555; border-left: 1px solid #777; border-radius: 0 5px 0 0; }
.win { position: absolute; display: flex; flex-direction: column; border: 1px solid #335064; }
.win header { flex: none; display: flex; align-items: center; gap: 3px; }
.win h2 { flex: 1; font: 10px/12px Lato, "Open Sans", sans-serif; white-space: nowrap; color: #33404e; }
.win .body { flex: 1; min-height: 0; display: grid; grid-template: minmax(0, 1fr) 15px / minmax(0, 1fr) 15px; background: #eff0f0; border: 1px solid #788490; border-width: 1px 0 0 1px; }
.one { left: -1px; top: 0; width: 690px; height: 401px; padding: 0 6px 5px; background: linear-gradient(#a8c0dc, #b4d4ee 24px, #b0cce4); }
.one header { height: 24px; padding-top: 3px; }
.two { left: 687px; top: 5px; width: 378px; height: 422px; padding: 0 5px 5px; background: linear-gradient(#ced6e2, #dce2ea 24px, #dce8f0); border-color: #777; }
.two header { height: 20px; }
.two h2 { color: #6a727c; }
.two .cap { background: #d8dfe8; border-color: #bcc4d0; }
.canvas { width: 100%; height: 100%; background: #dfe9e7; }
.names { font: 10px "Liberation Sans", Arial, sans-serif; fill: #704c50; }
.view { overflow: hidden; background: #e2ebe8; padding: 10px 14px 0 7px; }
.notes { height: 100%; padding: 15px 0 0 6px; background: #98b6d0; border: 1px solid #70767c; border-bottom: 0; overflow: hidden; font: 14px/17px "Liberation Sans", Arial, sans-serif; color: #10207c; }
.notes span { display: block; white-space: pre; }
.g4 { margin-top: 4px; } .g9 { margin-top: 9px; } .g12 { margin-top: 12px; } .g15 { margin-top: 15px; }
.vbar { display: flex; flex-direction: column; align-items: center; padding: 4px 0; background: #efefef; }
.hbar { display: flex; align-items: center; padding: 0 4px; background: #ececec; }
.a-up, .a-down, .a-left, .a-right { flex: none; width: 6px; height: 6px; display: flex; align-items: center; justify-content: center; }
.a-up::before, .a-down::before, .a-left::before, .a-right::before { content: ""; border: 3px solid transparent; }
.a-up::before { border-bottom-color: #444; border-top: 0; }
.a-down::before { border-top-color: #444; border-bottom: 0; }
.a-left::before { border-right-color: #444; border-left: 0; }
.a-right::before { border-left-color: #444; border-right: 0; }
.a-down { margin-top: auto; }
.a-right { margin-left: auto; }
.thumb { width: 12px; height: 12px; border: 1px solid #a8a8a8; background: linear-gradient(90deg, #777 1px, transparent 1px) 2px 2px / 3px 6px no-repeat, linear-gradient(90deg, #777 1px, transparent 1px) 5px 2px / 3px 6px no-repeat, linear-gradient(90deg, #777 1px, transparent 1px) 8px 2px / 1px 6px no-repeat, #f6f6f6; }
.hbar .thumb { margin-left: 5px; }
.vbar .thumb { margin-top: 4px; background: repeating-linear-gradient(#777 0 1px, transparent 1px 3px) 2px 2px / 6px 7px no-repeat, #f6f6f6; }
.vbar .thumb.low { margin-top: 19px; }
.size { align-self: end; justify-self: end; width: 8px; height: 8px; background: radial-gradient(circle, #aaa 1px, transparent 1px) 0 0 / 4px 4px; clip-path: polygon(100% 0, 100% 100%, 0 100%); }

.log-head { height: 20px; margin-top: 3px; background: linear-gradient(#acc0da, #c4d2e6); color: #34404e; padding: 0 4px 0 2px; }
.log { position: relative; flex: none; height: 117px; display: grid; grid-template: minmax(0, 1fr) 14px / minmax(0, 1fr) 14px; padding: 4px 6px 3px 3px; background: #fff; border-bottom: 1px solid #888; }
.log pre { padding: 20px 0 0 2px; font: 9px/10px "DejaVu Sans", Verdana, sans-serif; color: #38387c; }
.cursor { position: absolute; left: 134px; top: 68px; width: 10px; height: 14px; }
.bottom { height: 27px; margin-top: 1px; background: #f0f1fb; }
.bottom .group { background: linear-gradient(#f0f0fa, #dcdce4 60%, #bebec8); }
.box { flex: none; width: 43px; height: 18px; margin: 0 2px; background: #fff; font-size: 9px; }
.box.long { width: 77px; margin-left: 5px; padding-left: 2px; }
.box.dim { background: #f2f2f4; color: #888; margin-left: 5px; padding-left: 3px; }
.bottom label { padding-left: 6px; }
.mini { flex: none; width: 44px; height: 14px; margin: -4px 0 0 2px; display: flex; align-items: center; padding: 0 3px; background: #eee; }
.mini .thumb { margin-left: 4px; }
.status { flex: none; height: 18px; display: flex; align-items: center; padding-left: 5px; background: #efedf1; font-size: 9px; }
.status .size { margin-left: auto; }
</style>
